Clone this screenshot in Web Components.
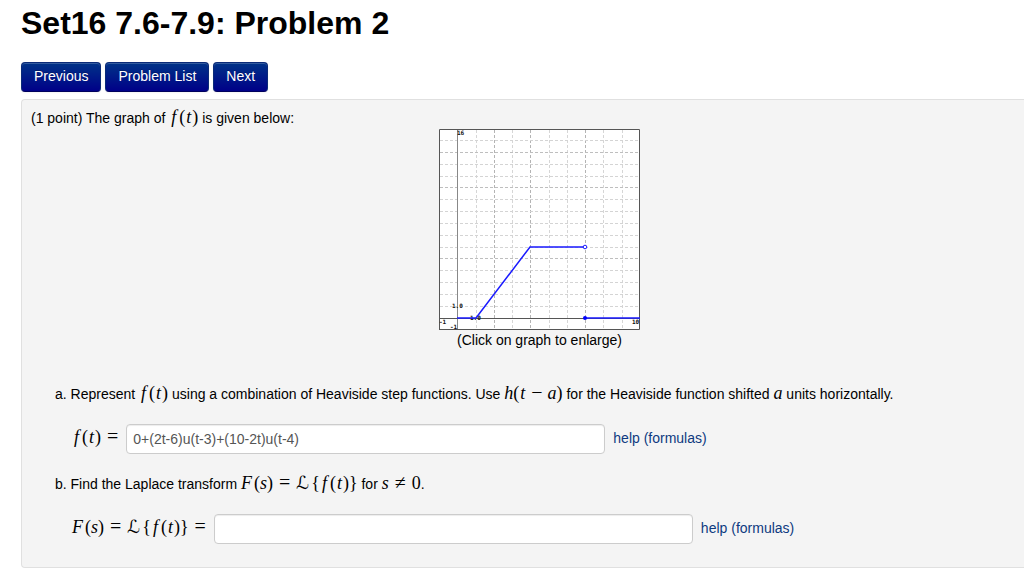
<!DOCTYPE html>
<html lang="en">
<head>
<meta charset="utf-8">
<title>Set16 7.6-7.9: Problem 2</title>
<style>
  body { margin: 0; background: #fff; color: #000; font: 14px/20px "Liberation Sans", Arial, sans-serif; }
</style>
</head>
<body>
<problem-page heading="Set16 7.6-7.9: Problem 2">
  <nav-button slot="nav">Previous</nav-button>
  <nav-button slot="nav">Problem List</nav-button>
  <nav-button slot="nav">Next</nav-button>
  <problem-panel>
    <text-line>(1 point) The graph of <math-expr tex="f(t)"></math-expr> is given below:</text-line>
    <function-graph>(Click on graph to enlarge)</function-graph>
    <problem-part>
      <text-line>a. Represent <math-expr tex="f(t)"></math-expr> using a combination of Heaviside step functions. Use <math-expr tex="h(t−a)"></math-expr> for the Heaviside function shifted <math-expr tex="a"></math-expr> units horizontally.</text-line>
      <answer-row slot="answer" name="answer-f" value="0+(2t-6)u(t-3)+(10-2t)u(t-4)"><math-expr tex="f(t)="></math-expr></answer-row>
    </problem-part>
    <problem-part>
      <text-line>b. Find the Laplace transform <math-expr tex="F(s)=ℒ{f(t)}"></math-expr> for <math-expr tex="s≠0"></math-expr>.</text-line>
      <answer-row slot="answer" name="answer-laplace"><math-expr tex="F(s)=ℒ{f(t)}="></math-expr></answer-row>
    </problem-part>
  </problem-panel>
</problem-page>

<script>
class ProblemPage extends HTMLElement {
  connectedCallback() {
    const root = this.attachShadow({ mode: "open" });
    root.innerHTML = `
      <style>
        :host { display: block; padding: 3px 0 8px 21px; }
        h1 { margin: 0 0 19px; font-size: 32px; line-height: 40px; font-weight: bold; }
        nav { display: flex; gap: 4px; margin-bottom: 7px; }
      </style>
      <h1></h1>
      <nav><slot name="nav"></slot></nav>
      <main><slot></slot></main>`;
    root.querySelector("h1").textContent = this.getAttribute("heading");
  }
}

class NavButton extends HTMLElement {
  connectedCallback() {
    this.attachShadow({ mode: "open" }).innerHTML = `
      <style>
        :host { display: block; }
        button {
          display: block; margin: 0; padding: 3px 12px 5px; cursor: pointer;
          font: inherit; line-height: 20px; color: #fff;
          text-shadow: 0 -1px 0 rgba(0,0,0,.25);
          background: linear-gradient(#003388, #000088);
          border: 1px solid #0a2a78; border-bottom-color: #00005c; border-radius: 4px;
          box-shadow: inset 0 1px 0 rgba(255,255,255,.2), 0 1px 2px rgba(0,0,0,.05);
        }
      </style>
      <button type="button"><slot></slot></button>`;
  }
}

class ProblemPanel extends HTMLElement {
  connectedCallback() {
    this.attachShadow({ mode: "open" }).innerHTML = `
      <style>
        :host {
          display: block; padding: 8px 0 23px 9px; background: #f4f4f4;
          border: 1px solid #e0e0e0; border-right: 0; border-radius: 4px 0 0 4px;
        }
      </style>
      <slot></slot>`;
  }
}

class TextLine extends HTMLElement {
  connectedCallback() {
    this.attachShadow({ mode: "open" }).innerHTML = `
      <style>
        :host { display: block; }
        p { margin: 0; line-height: 20px; }
      </style>
      <p><slot></slot></p>`;
  }
}

class MathExpr extends HTMLElement {
  connectedCallback() {
    const kinds = { "=": "rel", "≠": "rel", "−": "bin", "ℒ": "script", "(": "paren", ")": "paren", "{": "brace", "}": "brace" };
    const body = [...this.getAttribute("tex")].map(ch => {
      const kind = kinds[ch] || (/[a-z]/i.test(ch) ? "var " + ch : "num");
      return `<span class="${kind}">${ch}</span>`;
    }).join("");
    this.attachShadow({ mode: "open" }).innerHTML = `
      <style>
        :host { display: inline; font: 18px/1px "Liberation Serif", "Times New Roman", serif; white-space: nowrap; }
        .var { font-style: italic; }
        .f { margin: 0 3px 0 2px; }
        .F { margin-right: 2px; }
        .t { margin: 0 1px; }
        .rel, .bin { font-size: 20px; }
        .rel { margin: 0 6px; }
        .bin { margin: 0 5px; }
        .script { margin-right: 2px; font-family: "DejaVu Sans", sans-serif; font-size: 18px; }
        .rel:last-child { margin-right: 0; }
      </style>${body}`;
  }
}

class FunctionGraph extends HTMLElement {
  connectedCallback() {
    const xs = [37, 55, 73, 91, 110, 128, 146, 164, 183];
    const ys = [11, 23, 35, 47, 58, 70, 82, 94, 106, 118, 129, 141, 153, 165, 177];
    const strong = [55, 91, 146];
    const lines =
      xs.map(x => `<path d="M${x}.5 1V200" stroke="${strong.includes(x) ? "#b4b4b4" : "#d6d6d6"}"/>`).join("") +
      ys.map(y => `<path d="M1 ${y}.5H200" stroke="${[23, 58, 129].includes(y) ? "#bebebe" : "#d4d4d4"}"/>`).join("");
    this.attachShadow({ mode: "open" }).innerHTML = `
      <style>
        :host { display: block; padding: 1px 0 0 24px; }
        figure { display: flex; flex-direction: column; align-items: center; margin: 0 0 34px; }
        a { display: block; }
        svg { display: block; }
        text { font: bold 6px "DejaVu Sans Mono", monospace; fill: #111; }
      </style>
      <figure>
        <a href="#graph" aria-label="Enlarge graph">
          <svg width="201" height="201" viewBox="0 0 201 201" fill="none">
            <rect width="201" height="201" fill="#fff"/>
            <g stroke-dasharray="3 2">${lines}</g>
            <path d="M18.500 1V200" stroke="#888"/>
            <path d="M1 189.500H200" stroke="#555"/>
            <path d="M.5 201V.5H200.500V200.500H.5" stroke="#555"/>
            <text x="18" y="6">16</text><text x="13" y="179">1.0</text>
            <text x="0" y="195">-1</text><text x="11" y="200">-1</text>
            <text x="31" y="191">1.0</text><text x="193" y="195">10</text>
            <path d="M18 189H37L91 118H146M146 189H201" stroke="#1a1aff" stroke-width="1.500"/>
            <circle cx="146" cy="118" r="1.800" fill="#fff" stroke="#1a1aff"/>
            <circle cx="146" cy="189" r="2" fill="#00f"/>
          </svg>
        </a>
        <figcaption><slot></slot></figcaption>
      </figure>`;
  }
}

class ProblemPart extends HTMLElement {
  connectedCallback() {
    this.attachShadow({ mode: "open" }).innerHTML = `
      <style>
        :host { display: block; padding-left: 24px; }
        :host(:not(:last-child)) { margin-bottom: 20px; }
        .answer { padding: 20px 0 0 17px; }
      </style>
      <slot></slot>
      <div class="answer"><slot name="answer"></slot></div>`;
  }
}

class AnswerRow extends HTMLElement {
  connectedCallback() {
    const root = this.attachShadow({ mode: "open" });
    root.innerHTML = `
      <style>
        :host { display: flex; align-items: center; gap: 8px; }
        label { padding-bottom: 2px; }
        input {
          box-sizing: border-box; width: 479px; max-width: 60%; height: 30px; margin: 0; padding: 4px 6px;
          font: inherit; color: #555; background: #fff; border: 1px solid #ccc; border-radius: 4px;
          box-shadow: inset 0 1px 1px rgba(0,0,0,.075);
        }
        a { color: #0e3a80; text-decoration: none; padding-bottom: 2px; }
      </style>
      <label for="answer"><slot></slot></label>
      <input id="answer" type="text">
      <a href="#formulas">help (formulas)</a>`;
    const input = root.querySelector("input");
    input.name = this.getAttribute("name");
    input.value = this.getAttribute("value") || "";
  }
}

customElements.define("problem-page", ProblemPage);
customElements.define("nav-button", NavButton);
customElements.define("problem-panel", ProblemPanel);
customElements.define("text-line", TextLine);
customElements.define("math-expr", MathExpr);
customElements.define("function-graph", FunctionGraph);
customElements.define("problem-part", ProblemPart);
customElements.define("answer-row", AnswerRow);
</script>
</body>
</html>
